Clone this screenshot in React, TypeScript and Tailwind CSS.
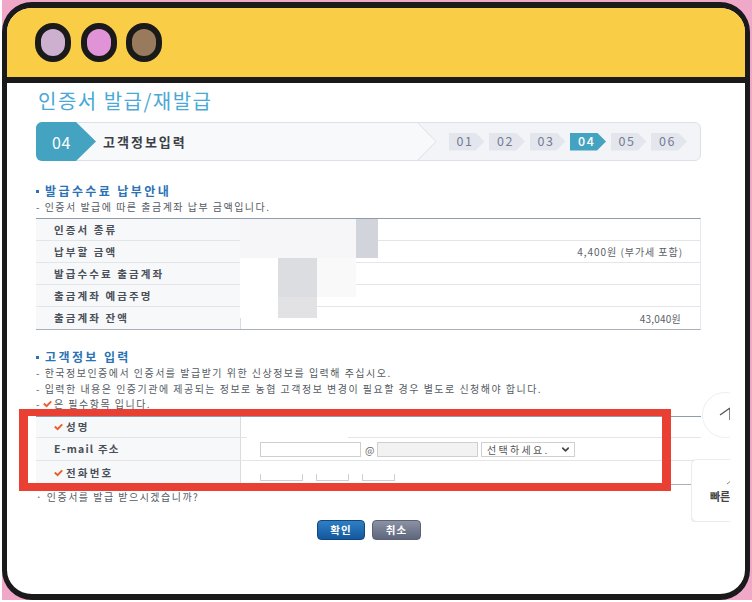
import { ChevronDown } from 'lucide-react'

const FONT = "font-['Noto_Sans_CJK_KR','Noto_Sans',sans-serif]"

const STEPS = ['01', '02', '03', '04', '05', '06']

const FEE_ROWS = [
  { label: '인증서 종류', value: '', valueCls: '' },
  { label: '납부할 금액', value: '4,400원 (부가세 포함)', valueCls: 'tracking-[0.95px] pr-[17px]' },
  { label: '발급수수료 출금계좌', value: '', valueCls: '' },
  { label: '출금계좌 예금주명', value: '', valueCls: '' },
  { label: '출금계좌 잔액', value: '43,040원', valueCls: 'tracking-[0.2px] pr-[19px]' },
]

// mosaic that hides the account details
const MOSAIC = [
  'left-[204px] top-0 w-[116px] h-[39px] bg-[#f6f6f8]',
  'left-[320px] top-0 w-[22px] h-[39px] bg-[#d2d4dc]',
  'left-[204px] top-[39px] w-[38px] h-[60px] bg-white',
  'left-[242px] top-[39px] w-[39px] h-[39px] bg-[#dcdde0]',
  'left-[242px] top-[78px] w-[39px] h-[21px] bg-[#e2e2e4]',
  'left-[281px] top-[39px] w-[39px] h-[39px] bg-[#f9f9f9]',
]

function CheckMark() {
  return (
    <svg width="9" height="8" viewBox="0 0 9 8" fill="none" stroke="#e8602c" strokeWidth="2" className="shrink-0">
      <path d="M0.8 3.5l2.8 2.7L8.2 1.4" />
    </svg>
  )
}

function SectionHead({ title }: { title: string }) {
  return (
    <div className="flex h-4 items-center gap-[6px] text-[12px] font-bold tracking-[2.4px] text-[#2a72b5]">
      <span className="h-[3px] w-[3px] bg-[#2a72b5]" />
      {title}
    </div>
  )
}

function Note({ children }: { children: React.ReactNode }) {
  return <p className="flex h-[15.5px] items-center gap-[2px] whitespace-nowrap text-[10px] tracking-[1.48px] text-[#555b63]">{children}</p>
}

function StepBar() {
  return (
    <div className="relative mt-[3px] flex h-[39px] items-center rounded-md border border-[#dde0e9] bg-[#f3f4f7]">
      <div className="absolute inset-y-0 left-0 w-[399px] rounded-l-md bg-[#f8f9fb] [clip-path:polygon(0_0,380px_0,399px_50%,380px_100%,0_100%)]" />
      <svg width="22" height="39" viewBox="0 0 22 39" fill="none" stroke="#dde0e9" className="absolute left-[379px] top-[-1px]">
        <path d="M1 0l19 19.5L1 39" />
      </svg>
      <div className="relative -my-px -ml-px flex h-[39px] w-[60px] items-center rounded-l-md bg-[#44a3c1] pl-[16px] text-[16px] tracking-[0.5px] text-white [clip-path:polygon(0_0,40px_0,60px_50%,40px_100%,0_100%)]">
        04
      </div>
      <span className="relative ml-[7px] text-[13px] font-bold tracking-[2px] text-[#3c3f47]">고객정보입력</span>
      <div className="relative ml-auto mr-[13px] flex gap-[4.5px]">
        {STEPS.map((step) => (
          <span
            key={step}
            className={
              step === '04'
                ? 'flex h-[18px] w-9 items-center pl-2 text-[12.5px] font-medium tracking-[1.5px] text-white bg-[#44a3c1] [clip-path:polygon(0_0,27px_0,36px_50%,27px_100%,0_100%)]'
                : 'flex h-[18px] w-9 items-center pl-2 text-[12.5px] tracking-[1.5px] text-[#727c92] bg-[#e4e6ee] [clip-path:polygon(0_0,27px_0,36px_50%,27px_100%,0_100%)]'
            }
          >
            {step}
          </span>
        ))}
      </div>
    </div>
  )
}

function FeeTable() {
  return (
    <div className="relative mt-[3.5px] border-y border-t-[#8f9caa] border-b-[#a9b0b8] border-r border-r-[#e4e8ee]">
      {FEE_ROWS.map((row, i) => (
        <div key={row.label} className={i === 4 ? 'flex h-[22px]' : 'flex h-[22px] border-b border-[#e3e5e9]'}>
          <div className="flex w-[205px] items-center border-r border-[#d9dbe0] bg-[#f7f8fa] pl-[18px] text-[10.5px] font-bold tracking-[2.1px] text-[#4a4f58]">
            {row.label}
          </div>
          <div className={`flex flex-1 items-center justify-end text-[10px] text-[#5c6068] ${row.valueCls}`}>{row.value}</div>
        </div>
      ))}
      {MOSAIC.map((cls) => (
        <div key={cls} className={`absolute ${cls}`} />
      ))}
    </div>
  )
}

function FormTable() {
  const labelCls =
    'flex w-[205px] items-center gap-[3px] border-r border-[#d9dbe0] bg-[#f7f8fa] pl-[18px] text-[10.5px] font-bold text-[#4a4f58]'
  return (
    <div className="relative mt-[4.5px] border-y border-t-[#8f9caa] border-b-[#a9b0b8]">
      <div className="flex h-[21px] border-b border-[#e3e5e9]">
        <div className={`${labelCls} tracking-[2.1px]`}>
          <CheckMark />
          성명
        </div>
      </div>
      <div className="absolute left-[211px] top-[20px] h-[2px] w-[101px] bg-white" />
      <div className="flex h-[23px] border-b border-[#e3e5e9]">
        <div className={`${labelCls} tracking-[1.2px]`}>E-mail 주소</div>
        <div className="flex flex-1 items-center pl-[19px] text-[10px] text-[#666]">
          <input readOnly className="h-[15px] w-[101px] border border-[#cfcfcf] bg-white" />
          <span className="mx-[4px] w-[8px]">@</span>
          <input readOnly className="h-[15px] w-[101px] border border-[#cfcfcf] bg-[#f2f2f2]" />
          <div className="ml-[3px] flex h-[15px] w-[94px] items-center justify-between border border-[#cfcfcf] bg-white pl-[5px] pr-[3px] text-[10px] tracking-[2.3px] text-[#555]">
            선택하세요.
            <ChevronDown size={11} strokeWidth={3.5} className="text-[#444]" />
          </div>
        </div>
      </div>
      <div className="flex h-[23px]">
        <div className={`${labelCls} tracking-[2.2px]`}>
          <CheckMark />
          전화번호
        </div>
        <div className="flex flex-1 items-end gap-[13px] pb-[3px] pl-[19px]">
          <div className="h-[7px] w-[43px] border-x border-b border-[#cfcfcf]" />
          <div className="h-[7px] w-[33px] border-x border-b border-[#cfcfcf]" />
          <div className="h-[7px] w-[33px] border-x border-b border-[#cfcfcf]" />
        </div>
      </div>
    </div>
  )
}

export default function App() {
  return (
    <div className={`relative h-[602px] w-[752px] overflow-hidden border-b-2 border-l-2 border-white bg-[#f0a8c8] pt-[2px] ${FONT}`}>
      <div className="relative h-[598px] w-[748px] overflow-hidden rounded-[30px] border-x-[5px] border-y-[6px] border-[#1a1a1a] bg-white">
        {/* Title bar */}
        <div className="flex h-[75px] items-center gap-[9.5px] border-b-[6px] border-[#1a1a1a] bg-[#f9cd46] pl-[28px]">
          <span className="h-[39px] w-[36px] rounded-full border-[6px] border-[#1a1a1a] bg-[#cdb0cf]" />
          <span className="h-[39px] w-[36px] rounded-full border-[6px] border-[#1a1a1a] bg-[#e093d6]" />
          <span className="h-[39px] w-[36px] rounded-full border-[6px] border-[#1a1a1a] bg-[#9a7a5c]" />
        </div>

        <div className="w-[694px] pl-[29px]">
          <h1 className="flex h-[36px] items-center pl-[2px] text-[20px] tracking-[1.5px] text-[#4aa9d6]">인증서 발급/재발급</h1>
          <StepBar />

          <div className="mt-[22px]">
            <SectionHead title="발급수수료 납부안내" />
            <Note>- 인증서 발급에 따른 출금계좌 납부 금액입니다.</Note>
            <FeeTable />
          </div>

          <div className="mt-[19px]">
            <SectionHead title="고객정보 입력" />
            <Note>- 한국정보인증에서 인증서를 발급받기 위한 신상정보를 입력해 주십시오.</Note>
            <Note>- 입력한 내용은 인증기관에 제공되는 정보로 농협 고객정보 변경이 필요할 경우 별도로 신청해야 합니다.</Note>
            <Note>
              -
              <CheckMark />
              은 필수항목 입니다.
            </Note>
            <FormTable />
          </div>

          <div className="mt-[4px]">
            <Note>· 인증서를 발급 받으시겠습니까?</Note>
          </div>

          <div className="mt-[15px] flex justify-center gap-[7px] pl-px">
            <button className="h-[20px] w-[48px] rounded-[4px] border border-[#14467c] bg-gradient-to-b from-[#2f7fc4] to-[#14589f] text-[10.5px] font-bold tracking-[1.2px] text-white">
              확인
            </button>
            <button className="h-[20px] w-[49px] rounded-[4px] border border-[#5a6275] bg-gradient-to-b from-[#8b92a5] to-[#5f677c] text-[10.5px] font-bold tracking-[1.2px] text-white">
              취소
            </button>
          </div>
        </div>
      </div>

      {/* Red annotation box */}
      <div className="absolute left-[17px] top-[409px] h-[82px] w-[652px] border-x-[9px] border-b-[8px] border-t-[7px] border-[#ea4034]" />

      {/* Floating widgets clipped by the captured window */}
      <div className="absolute left-[700px] top-[392px] h-[46px] w-[28px] overflow-hidden">
        <div className="relative h-[46px] w-[46px] rounded-full border border-[#eeeeee] bg-white">
          <svg width="28" height="46" viewBox="0 0 28 46" fill="none" stroke="#555" strokeWidth="1.4" className="absolute left-0 top-0">
            <path d="M17 22l10-7M27 15v12" />
          </svg>
        </div>
      </div>
      <div className="absolute left-[689px] top-[459px] h-[63px] w-[39px] overflow-hidden">
        <div className="relative h-[63px] w-[60px] rounded-l-md border border-[#ececec] bg-white shadow-sm">
          <svg width="8" height="8" viewBox="0 0 8 8" stroke="#888" className="absolute left-[34px] top-[18px]">
            <path d="M1 6l5-4" />
          </svg>
          <span className="absolute left-[18px] top-[28px] text-[11px] font-bold text-[#444]">빠른</span>
        </div>
      </div>
    </div>
  )
}
